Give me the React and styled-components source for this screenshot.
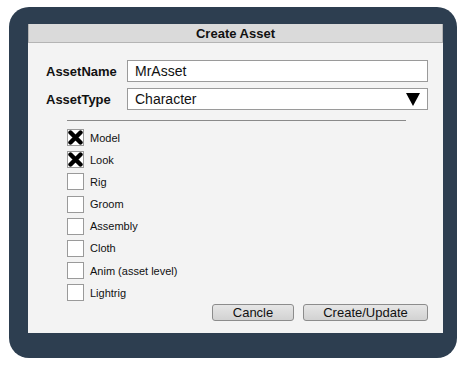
import React from "react";
import styled, { createGlobalStyle } from "styled-components";

const Global = createGlobalStyle`
  body {
    margin: 0;
    background: #fff;
    font-family: "Liberation Sans", Arial, sans-serif;
  }
`;

const Frame = styled.div`
  margin: 7px 0 0 9px;
  width: 448px;
  height: 351px;
  box-sizing: border-box;
  padding: 17px 14px 25px 19px;
  background: #2d3e50;
  border-radius: 20px;
`;

const Panel = styled.div`
  width: 415px;
  height: 309px;
  background: #f3f3f3;
  display: flex;
  flex-direction: column;
`;

const TitleBar = styled.div`
  height: 18px;
  background: #dadada;
  border: 1px solid #b4b4b4;
  border-top: none;
  display: flex;
  align-items: center;
  justify-content: center;
  font-weight: bold;
  font-size: 13px;
  color: #111;
`;

const Form = styled.div`
  display: flex;
  flex-direction: column;
  gap: 6px;
  margin-top: 17px;
  padding-left: 18px;
`;

const Row = styled.div`
  display: flex;
  align-items: center;
`;

const Label = styled.label`
  width: 81px;
  font-weight: bold;
  font-size: 13px;
  color: #111;
`;

const Field = styled.div`
  width: 301px;
  height: 22px;
  box-sizing: border-box;
  border: 1px solid #9a9a9a;
  background: #fff;
  display: flex;
  align-items: center;
  justify-content: space-between;
  padding: 0 7px 0 7px;
  font-size: 14px;
  color: #111;
`;

const Arrow = styled.span`
  width: 0;
  height: 0;
  border-left: 7px solid transparent;
  border-right: 7px solid transparent;
  border-top: 13px solid #000;
`;

const Divider = styled.div`
  margin: 10px 0 0 39px;
  width: 339px;
  height: 1px;
  background: #8a8a8a;
`;

const List = styled.div`
  display: flex;
  flex-direction: column;
  gap: 5.2px;
  margin: 8px 0 0 39px;
`;

const Item = styled.div`
  display: flex;
  align-items: center;
  height: 17px;
  gap: 6px;
  font-size: 11px;
  color: #111;
`;

const Box = styled.span`
  width: 17px;
  height: 17px;
  box-sizing: border-box;
  border: 1px solid #9a9a9a;
  background: #fff;
  display: flex;
  align-items: center;
  justify-content: center;
`;

const Actions = styled.div`
  display: flex;
  justify-content: flex-end;
  gap: 9px;
  margin-top: 2.5px;
  padding-right: 15px;
`;

const Button = styled.button`
  width: ${(p) => p.w}px;
  height: 17px;
  padding: 0;
  border: 1px solid #8c8c8c;
  border-radius: 3px;
  background: linear-gradient(#e6e6e6, #d2d2d2);
  font-family: "Liberation Sans", Arial, sans-serif;
  font-size: 13px;
  color: #111;
  line-height: 15px;
`;

const Cross = () => (
  <svg width="15" height="15" viewBox="0 0 15 15">
    <path d="M2.5 2.5 L12.5 12.5 M12.5 2.5 L2.5 12.5" stroke="#000" strokeWidth="4.4" strokeLinecap="round" />
  </svg>
);

const items = [
  { name: "Model", checked: true },
  { name: "Look", checked: true },
  { name: "Rig" },
  { name: "Groom" },
  { name: "Assembly" },
  { name: "Cloth" },
  { name: "Anim (asset level)" },
  { name: "Lightrig" },
];

export default function App() {
  return (
    <>
      <Global />
      <Frame>
        <Panel>
          <TitleBar>Create Asset</TitleBar>
          <Form>
            <Row>
              <Label>AssetName</Label>
              <Field>MrAsset</Field>
            </Row>
            <Row>
              <Label>AssetType</Label>
              <Field>
                Character
                <Arrow />
              </Field>
            </Row>
          </Form>
          <Divider />
          <List>
            {items.map((it) => (
              <Item key={it.name}>
                <Box>{it.checked && <Cross />}</Box>
                {it.name}
              </Item>
            ))}
          </List>
          <Actions>
            <Button w={82}>Cancle</Button>
            <Button w={125}>Create/Update</Button>
          </Actions>
        </Panel>
      </Frame>
    </>
  );
}
